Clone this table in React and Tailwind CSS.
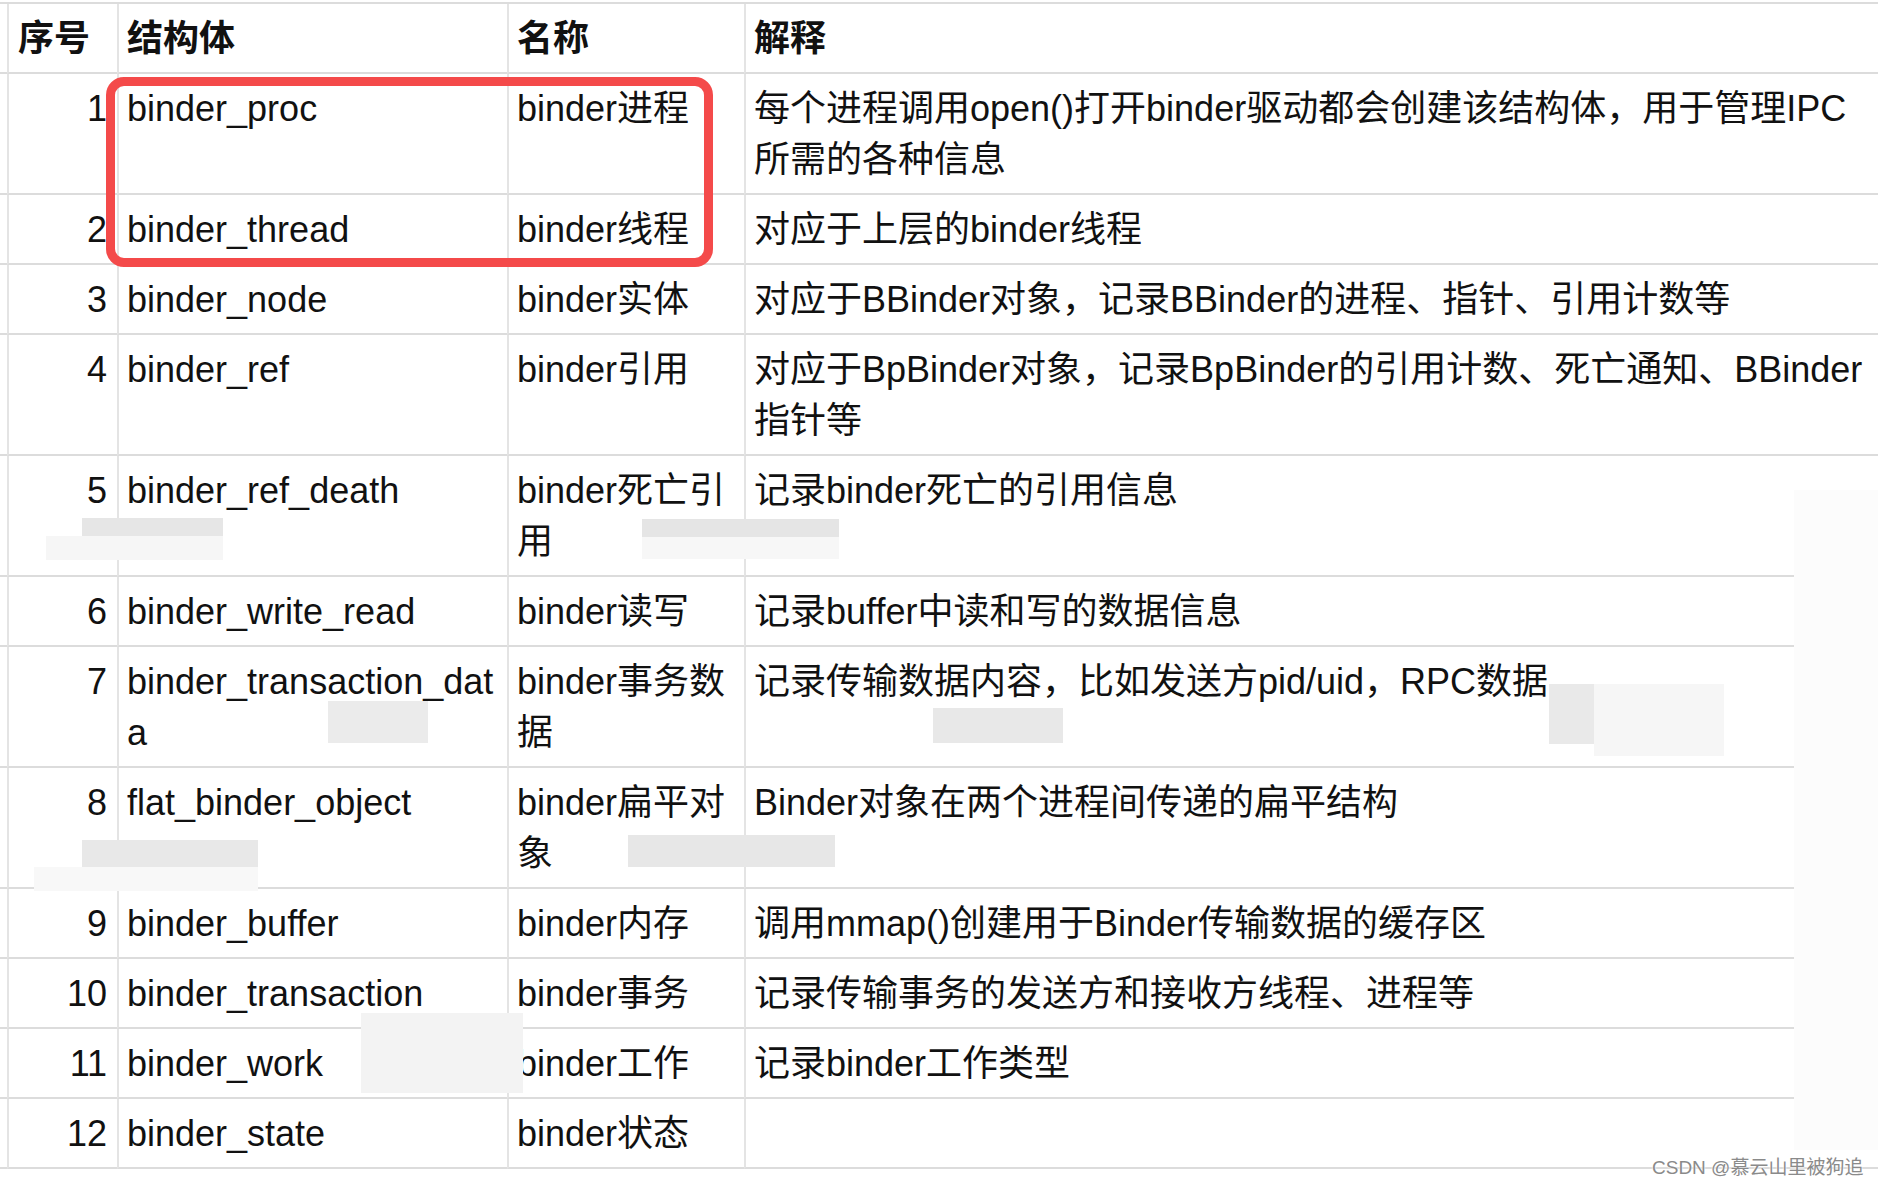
import React from "react";

const ROWS = [
    ["1", "binder_proc", "binder进程", "每个进程调用open()打开binder驱动都会创建该结构体，用于管理IPC所需的各种信息"],
    ["2", "binder_thread", "binder线程", "对应于上层的binder线程"],
    ["3", "binder_node", "binder实体", "对应于BBinder对象，记录BBinder的进程、指针、引用计数等"],
    ["4", "binder_ref", "binder引用", "对应于BpBinder对象，记录BpBinder的引用计数、死亡通知、BBinder指针等"],
    ["5", "binder_ref_death", "binder死亡引用", "记录binder死亡的引用信息"],
    ["6", "binder_write_read", "binder读写", "记录buffer中读和写的数据信息"],
    ["7", "binder_transaction_data", "binder事务数据", "记录传输数据内容，比如发送方pid/uid，RPC数据"],
    ["8", "flat_binder_object", "binder扁平对象", "Binder对象在两个进程间传递的扁平结构"],
    ["9", "binder_buffer", "binder内存", "调用mmap()创建用于Binder传输数据的缓存区"],
    ["10", "binder_transaction", "binder事务", "记录传输事务的发送方和接收方线程、进程等"],
    ["11", "binder_work", "binder工作", "记录binder工作类型"],
    ["12", "binder_state", "binder状态", ""],
];

// blurred masks left over in the screenshot
const PATCHES = [
    "left-[82px] top-[518px] w-[141px] h-[18px] bg-[#e6e6e6]",
    "left-[46px] top-[536px] w-[177px] h-[24px] bg-[#f6f6f6]",
    "left-[642px] top-[519px] w-[197px] h-[18px] bg-[#e5e5e5]",
    "left-[642px] top-[537px] w-[197px] h-[22px] bg-[#f7f7f7]",
    "left-[328px] top-[701px] w-[100px] h-[42px] bg-[#ebebeb]",
    "left-[933px] top-[708px] w-[130px] h-[35px] bg-[#e8e8e8]",
    "left-[1549px] top-[684px] w-[45px] h-[60px] bg-[#e9e9e9]",
    "left-[1594px] top-[684px] w-[130px] h-[72px] bg-[#f6f6f6]",
    "left-[82px] top-[840px] w-[176px] h-[27px] bg-[#e8e8e8]",
    "left-[34px] top-[867px] w-[224px] h-[24px] bg-[#f8f8f8]",
    "left-[628px] top-[835px] w-[207px] h-[32px] bg-[#e7e7e7]",
    "left-[361px] top-[1013px] w-[162px] h-[80px] bg-[#f3f3f3]",
];

const cell = "border-l-2 border-b-2 border-l-[#e4e4e4] border-b-[#dcdcdc] pt-[9px] pb-2";

export default function App() {
    return (
        <div
            className="relative w-[1878px] h-[1188px] bg-white overflow-hidden text-[36px] leading-[51px] text-[#111]"
            style={{ fontFamily: '"Liberation Sans", "Noto Sans CJK SC", sans-serif' }}
        >
            <div className="pt-[2px]">
                <div className="grid grid-cols-[7px_110px_390px_237px_1134px] border-t-2 border-[#dcdcdc]">
                    {/* header */}
                    <div className="border-b-2 border-[#dcdcdc]" />
                    <div className={`${cell} pl-[9px] font-bold`}>序号</div>
                    <div className={`${cell} pl-2 font-bold`}>结构体</div>
                    <div className={`${cell} pl-2 font-bold`}>名称</div>
                    <div className={`${cell} pl-2 font-bold`}>解释</div>

                    {ROWS.map(([no, struct, name, desc]) => (
                        <React.Fragment key={no}>
                            <div className="border-b-2 border-[#dcdcdc]" />
                            <div className={`${cell} pr-[10px] text-right`}>{no}</div>
                            <div className={`${cell} pl-2 pr-2 break-all`}>{struct}</div>
                            <div className={`${cell} pl-2 pr-2`}>{name}</div>
                            <div className={`${cell} pl-2 pr-2`}>{desc}</div>
                        </React.Fragment>
                    ))}
                </div>
            </div>

            {PATCHES.map((p, i) => (
                <div key={i} className={`absolute ${p}`} />
            ))}

            {/* right edge mask over lower rows */}
            <div className="absolute left-[1794px] top-[490px] w-[84px] h-[660px] bg-[#fcfcfc]" />

            {/* highlight box */}
            <div className="absolute left-[106px] top-[77px] w-[607px] h-[190px] border-[9px] border-[#f44a4a] rounded-[18px]" />

            {/* watermark */}
            <div className="absolute left-[1652px] top-[1155px] text-[19px] leading-[26px] text-[#8a8a8a] [text-shadow:0_0_2px_#fff,0_0_2px_#fff]">
                CSDN @慕云山里被狗追
            </div>
        </div>
    );
}
